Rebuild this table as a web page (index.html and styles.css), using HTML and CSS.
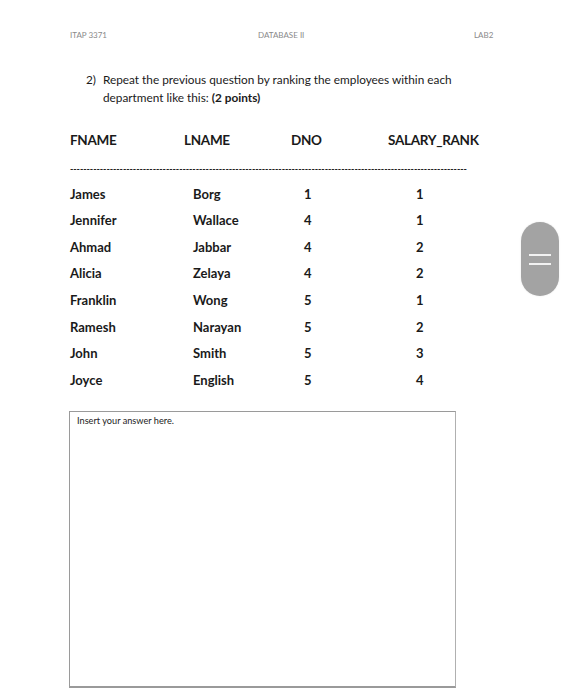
FILE: index.html
```html
<!DOCTYPE html>
<html>
<head>
<meta charset="utf-8">
<link rel="stylesheet" href="styles.css">
</head>
<body>
<div class="page">
  <header class="top">
    <span class="top-left">ITAP 3371</span>
    <span class="top-mid">DATABASE II</span>
    <span class="top-right">LAB2</span>
  </header>
  <div class="question">
    <span class="qnum">2)</span>
    <div class="qtext">
      <span class="line">Repeat the previous question by ranking the employees within each</span>
      <span class="line">department like this: <b>(2 points)</b></span>
    </div>
  </div>
  <div class="table">
    <div class="row head"><span>FNAME</span><span class="c2">LNAME</span><span class="c3">DNO</span><span class="c4">SALARY_RANK</span></div>
    <div class="dashes">------------------------------------------------------------------------------------------------------------------------</div>
    <div class="row"><span>James</span><span class="c2">Borg</span><span class="c3">1</span><span class="c4">1</span></div>
    <div class="row"><span>Jennifer</span><span class="c2">Wallace</span><span class="c3">4</span><span class="c4">1</span></div>
    <div class="row"><span>Ahmad</span><span class="c2">Jabbar</span><span class="c3">4</span><span class="c4">2</span></div>
    <div class="row"><span>Alicia</span><span class="c2">Zelaya</span><span class="c3">4</span><span class="c4">2</span></div>
    <div class="row"><span>Franklin</span><span class="c2">Wong</span><span class="c3">5</span><span class="c4">1</span></div>
    <div class="row"><span>Ramesh</span><span class="c2">Narayan</span><span class="c3">5</span><span class="c4">2</span></div>
    <div class="row"><span>John</span><span class="c2">Smith</span><span class="c3">5</span><span class="c4">3</span></div>
    <div class="row"><span>Joyce</span><span class="c2">English</span><span class="c3">5</span><span class="c4">4</span></div>
  </div>
  <div class="answer">Insert your answer here.</div>
</div>
<div class="scroll-pill"><span></span><span></span></div>
</body>
</html>
```
FILE: styles.css
```css
html, body {
  margin: 0;
  padding: 0;
  background: #fff;
}
body {
  width: 566px;
  height: 700px;
  overflow: hidden;
  font-family: "Lato", "Liberation Sans", sans-serif;
  color: #1a1a1a;
}
.page {
  padding: 30px 0 0 69px;
  width: 430px;
}
.top {
  display: flex;
  font-size: 8px;
  color: #8a8a8a;
  height: 11px;
  line-height: 11px;
}
.top-left { width: 188px; padding-left: 1px; }
.top-mid { width: 216px; }
.question {
  display: flex;
  margin-top: 30px;
  padding-left: 17px;
  font-size: 11.8px;
  line-height: 18px;
}
.qnum { width: 17px; flex: none; }
.qtext { width: 370px; }
.line { display: block; white-space: nowrap; }
.table {
  margin-top: 20px;
  padding-left: 1px;
  font-weight: 700;
  font-size: 13px;
}
.row {
  display: grid;
  grid-template-columns: 123px 111px 112px auto;
  height: 26.6px;
  line-height: 26.6px;
}
.row.head {
  grid-template-columns: 114px 107px 97px auto;
  font-size: 13.5px;
  letter-spacing: -0.3px;
}
.dashes {
  font-size: 9px;
  font-weight: 700;
  line-height: 8px;
  height: 8px;
  white-space: nowrap;
  letter-spacing: -0.05px;
  margin: 11px 0 8px;
  color: #222;
}
.answer {
  margin-top: 18px;
  width: 378px;
  height: 271px;
  border: 1px solid #9a9a9a;
  border-bottom-width: 2px;
  border-right-color: #b0b0b0;
  padding: 3px 0 0 7px;
  font-size: 9.2px;
  color: #222;
}
.scroll-pill {
  position: absolute;
  left: 521px;
  top: 222px;
  width: 38px;
  height: 74px;
  border-radius: 19px;
  background: #a3a3a3;
  box-shadow: 0 0 2px rgba(0,0,0,0.1);
  display: flex;
  flex-direction: column;
  align-items: center;
  justify-content: center;
  gap: 7px;
}
.scroll-pill span {
  display: block;
  width: 22px;
  height: 2px;
  background: #f2f2f2;
}
```
